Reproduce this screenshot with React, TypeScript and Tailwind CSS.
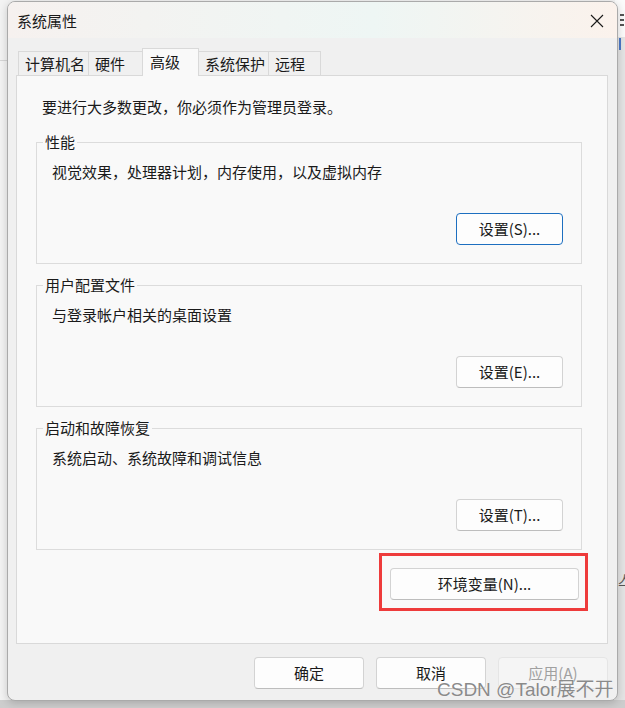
import React from "react";

const FONT = "font-['Noto_Sans_CJK_SC','Noto_Sans',sans-serif]";

function Btn({
  children,
  w,
  focused,
  disabled,
}: {
  children: React.ReactNode;
  w: string;
  focused?: boolean;
  disabled?: boolean;
}) {
  const base =
    "h-[32px] rounded-[4px] border flex items-center justify-center text-[15px] leading-[20px] ";
  const style = disabled
    ? "bg-[#f5f5f5] border-[#e5e5e5] text-[#a0a0a0]"
    : focused
    ? "bg-[#fdfdfd] border-[#1d6fc0] text-[#1a1a1a]"
    : "bg-[#fdfdfd] border-[#d3d3d3] border-b-[#bdbdbd] text-[#1a1a1a]";
  return <div className={base + style + " " + w}>{children}</div>;
}

function Group({
  label,
  desc,
  btn,
  focused,
  className,
}: {
  label: string;
  desc: string;
  btn: string;
  focused?: boolean;
  className: string;
}) {
  return (
    <div
      className={
        "relative ml-[19px] w-[546px] h-[122px] border border-[#dcdcdc] flex flex-col " +
        className
      }
    >
      <div className="absolute left-[6px] top-[-11px] px-[2px] bg-[#f9f9f9] text-[15px] leading-[20px] text-[#1a1a1a]">
        {label}
      </div>
      <div className="mt-[19px] ml-[15px] text-[15px] leading-[20px] text-[#1a1a1a]">
        {desc}
      </div>
      <div className="mt-[31px] mr-[18px] self-end">
        <Btn w="w-[107px]" focused={focused}>
          {btn}
        </Btn>
      </div>
    </div>
  );
}

function Tab({
  label,
  w,
  selected,
  first,
}: {
  label: string;
  w: string;
  selected?: boolean;
  first?: boolean;
}) {
  if (selected) {
    return (
      <div
        className={
          "relative z-10 -ml-px mb-[-1px] h-[28px] bg-[#f9f9f9] border border-b-0 border-[#d9d9d9] pl-[7px] pt-[3px] text-[15px] leading-[20px] text-[#1a1a1a] " +
          w
        }
      >
        {label}
      </div>
    );
  }
  return (
    <div
      className={
        "h-[24px] bg-[#f0f0f0] border border-b-0 border-[#d9d9d9] pl-[6px] pt-[2px] text-[15px] leading-[20px] text-[#1a1a1a] " +
        (first ? "" : "-ml-px ") +
        w
      }
    >
      {label}
    </div>
  );
}

export default function App() {
  return (
    <div
      className={
        "relative w-[625px] h-[708px] overflow-hidden bg-[#f3f3f3] " + FONT
      }
    >
      {/* desktop background bits */}
      <div className="absolute left-0 top-[60px] w-[8px] h-px bg-[#d6d6d6]" />
      <div className="absolute right-0 top-0 w-[10px] h-[37px] bg-[#fbfbfb]" />
      <div className="absolute right-0 top-[37px] w-[10px] bottom-0 bg-[#e4e4e4]" />
      <div className="absolute right-[1px] top-[14px] w-[4px] h-[2px] bg-[#555]" />
      <div className="absolute right-[1px] top-[19px] w-[4px] h-[2px] bg-[#555]" />
      <div className="absolute right-[1px] top-[24px] w-[4px] h-[2px] bg-[#555]" />
      <div className="absolute right-[1px] top-[38px] w-[5px] h-[12px] border-l-2 border-[#4a78c8]" />
      <div className="absolute left-0 right-0 bottom-0 h-[8px] bg-[#cdcdcd]" />
      <div className="absolute left-[618px] top-[572px] text-[13px] leading-[16px] text-[#555]">
        亼
      </div>

      {/* window */}
      <div className="absolute left-[7px] top-[1px] w-[611px] h-[700px] rounded-[8px] border border-[#aaaaaa] bg-[#f0f0f0] overflow-hidden flex flex-col shadow-[0_2px_8px_rgba(0,0,0,0.18)]">
        {/* title bar */}
        <div className="h-[36px] shrink-0 flex items-center justify-between pl-[9px] pr-[13px] bg-[linear-gradient(90deg,#f6f1ef_0%,#f0f5f3_45%,#eef6f4_60%,#fbf2ec_100%)]">
          <span className="text-[15px] leading-[20px] text-[#1a1a1a] mt-[1px]">
            系统属性
          </span>
          <svg width="14" height="14" viewBox="0 0 14 14" className="mt-[1px]">
            <path
              d="M1 1 L13 13 M13 1 L1 13"
              stroke="#1a1a1a"
              strokeWidth="1.1"
              fill="none"
            />
          </svg>
        </div>

        {/* tabs */}
        <div className="pt-[10px] pl-[10px] flex items-end">
          <Tab label="计算机名" w="w-[71px]" first />
          <Tab label="硬件" w="w-[55px]" />
          <Tab label="高级" w="w-[57px]" selected />
          <Tab label="系统保护" w="w-[71px]" />
          <Tab label="远程" w="w-[53px]" />
        </div>

        {/* panel */}
        <div className="ml-[8px] w-[592px] h-[569px] shrink-0 border border-[#d9d9d9] bg-[#f9f9f9] flex flex-col">
          <div className="mt-[21px] ml-[25px] text-[15px] leading-[20px] text-[#1a1a1a]">
            要进行大多数更改，你必须作为管理员登录。
          </div>
          <Group
            className="mt-[25px]"
            label="性能"
            desc="视觉效果，处理器计划，内存使用，以及虚拟内存"
            btn="设置(S)..."
            focused
          />
          <Group
            className="mt-[21px]"
            label="用户配置文件"
            desc="与登录帐户相关的桌面设置"
            btn="设置(E)..."
          />
          <Group
            className="mt-[21px]"
            label="启动和故障恢复"
            desc="系统启动、系统故障和调试信息"
            btn="设置(T)..."
          />
          <div className="mt-[3px] mr-[19px] self-end border-[3px] border-[#ee3b3b] pt-[12px] pl-[8px] pr-[6px] pb-[8px]">
            <Btn w="w-[189px]">环境变量(N)...</Btn>
          </div>
        </div>

        {/* bottom buttons */}
        <div className="mt-[13px] pr-[9px] flex justify-end gap-[12px]">
          <Btn w="w-[110px]">确定</Btn>
          <Btn w="w-[110px]">取消</Btn>
          <Btn w="w-[110px]" disabled>
            应用(A)
          </Btn>
        </div>
      </div>

      {/* watermark */}
      <div className="absolute left-[437px] top-[678px] text-[19px] leading-[24px] text-[#8a8a8a] font-['Liberation_Sans','Noto_Sans_CJK_SC',sans-serif] [text-shadow:0_0_1px_#ffffff]">
        CSDN @Talor展不开
      </div>
    </div>
  );
}
